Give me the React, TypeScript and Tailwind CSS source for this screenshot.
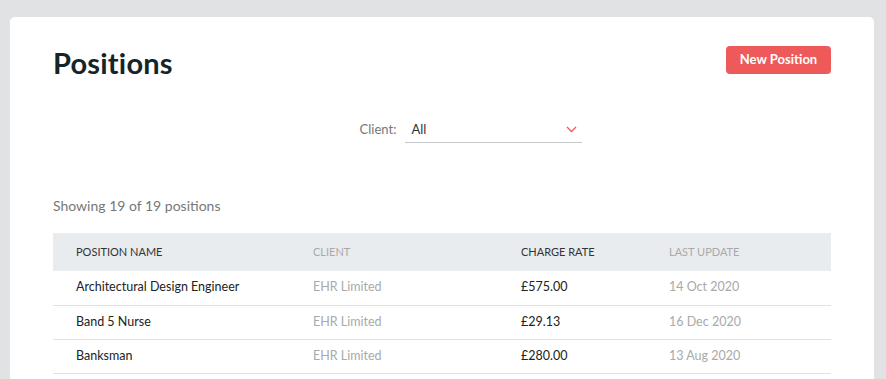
const rows = [
  { name: "Architectural Design Engineer", client: "EHR Limited", rate: "£575.00", updated: "14 Oct 2020" },
  { name: "Band 5 Nurse", client: "EHR Limited", rate: "£29.13", updated: "16 Dec 2020" },
  { name: "Banksman", client: "EHR Limited", rate: "£280.00", updated: "13 Aug 2020" },
];

export default function App() {
  return (
    <div className="h-[379px] overflow-hidden bg-[#e1e2e4] pt-[17px] pl-[10px] pr-[12px] font-['Lato',sans-serif]">
      <div className="min-h-[400px] rounded-t-[5px] bg-white px-[43px] pt-[29px]">
        <div className="flex items-start justify-between">
          <h1 className="-mt-[1px] text-[29px] font-bold leading-[36px] tracking-[0.2px] text-[#14252a]">
            Positions
          </h1>
          <button className="h-[28px] w-[105px] rounded-[4px] bg-[#ee5959] text-[13px] font-bold text-white">
            New Position
          </button>
        </div>

        <div className="mt-[36px] flex items-center justify-center pl-[58px]">
          <span className="mr-[9px] text-[13px] text-[#777]">Client:</span>
          <div className="flex h-[26px] w-[177px] items-center justify-between border-b border-[#c6c9cc] pl-[6px] pr-[5px]">
            <span className="text-[13px] text-[#333]">All</span>
            <svg width="11" height="7" viewBox="0 0 11 7" fill="none">
              <path d="M1 1l4.5 4.5L10 1" stroke="#ee5959" strokeWidth="1.3" />
            </svg>
          </div>
        </div>

        <p className="mt-[52px] text-[14px] text-[#777]">Showing 19 of 19 positions</p>

        <table className="mt-[17px] w-full text-left text-[12.5px]">
          <thead>
            <tr className="h-[38px] bg-[#e9ecef] text-[11px] uppercase">
              <th className="w-[260px] pl-[23px] font-normal text-[#333]">Position Name</th>
              <th className="w-[208px] font-normal text-[#a9a9a9]">Client</th>
              <th className="w-[148px] font-normal text-[#333]">Charge Rate</th>
              <th className="font-normal text-[#a9a9a9]">Last Update</th>
            </tr>
          </thead>
          <tbody>
            {rows.map((r) => (
              <tr key={r.name} className="h-[34px] border-b border-[#dee2e6]">
                <td className="pl-[23px] text-[#222]">{r.name}</td>
                <td className="text-[#a9a9a9]">{r.client}</td>
                <td className="text-[#222]">{r.rate}</td>
                <td className="text-[#a9a9a9]">{r.updated}</td>
              </tr>
            ))}
          </tbody>
        </table>
      </div>
    </div>
  );
}
